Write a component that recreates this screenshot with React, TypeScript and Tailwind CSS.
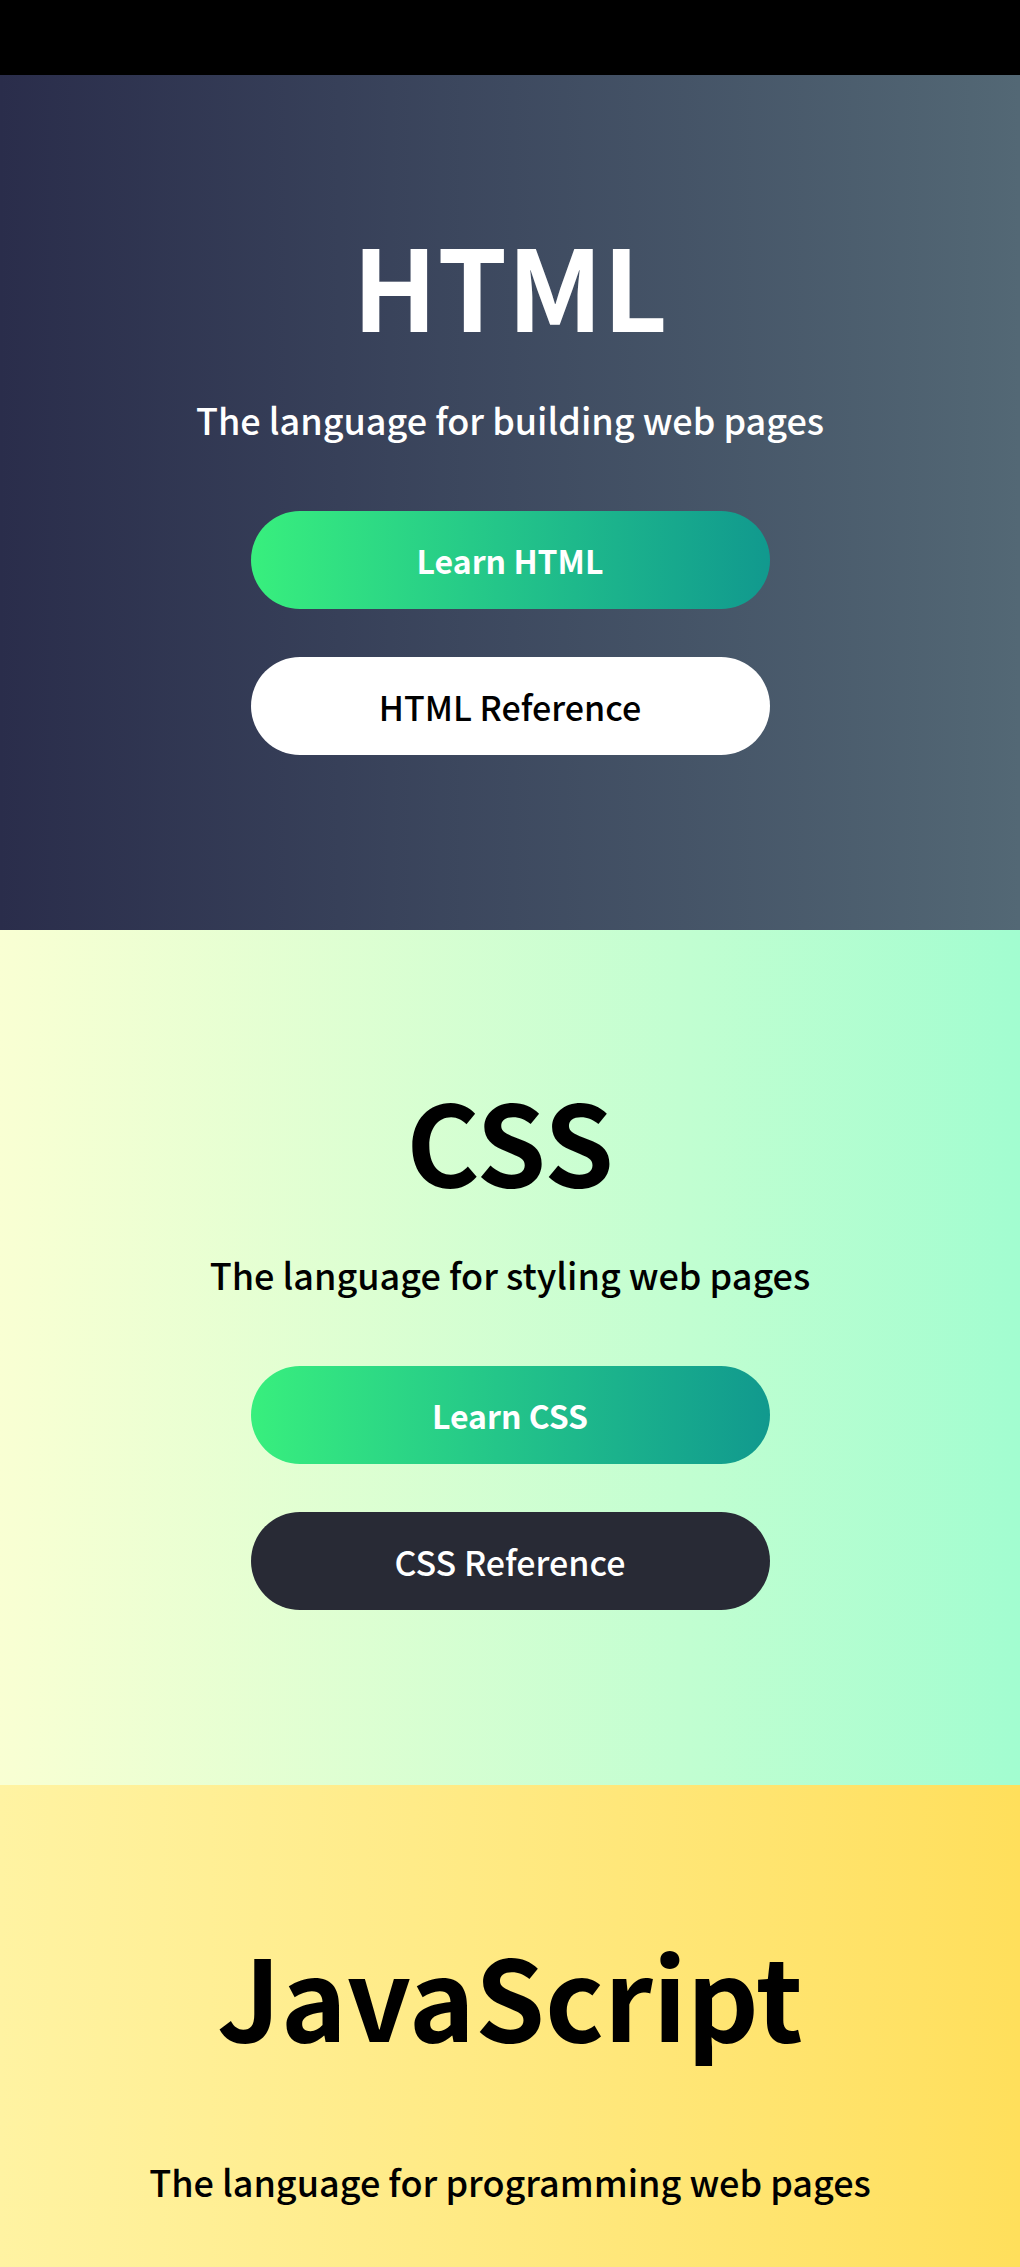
import React from 'react';

const font = { fontFamily: '"Noto Sans CJK SC", "Noto Sans", sans-serif' };

function Section({
  title,
  subtitle,
  bg,
  dark,
  learn,
  reference,
  subGap,
}: {
  title: string;
  subtitle: string;
  bg: string;
  dark?: boolean;
  learn?: string;
  reference?: string;
  subGap: string;
}) {
  return (
    <section className={`flex flex-col items-center pt-[152px] pb-[175px] ${bg}`}>
      <h1 className={`text-[112px] leading-none font-bold ${dark ? 'text-white' : 'text-black'}`}>{title}</h1>
      <p className={`${subGap} text-[36px] leading-none font-medium ${dark ? 'text-white' : 'text-black'}`}>
        {subtitle}
      </p>
      {learn && (
        <button className="mt-[74px] w-[519px] h-[98px] rounded-full bg-gradient-to-r from-[#38ef7d] to-[#11998e] text-white text-[32px] font-semibold">
          {learn}
        </button>
      )}
      {reference && (
        <button
          className={`mt-[48px] w-[519px] h-[98px] rounded-full text-[34px] font-medium ${
            dark ? 'bg-white text-black' : 'bg-[#282a35] text-white'
          }`}
        >
          {reference}
        </button>
      )}
    </section>
  );
}

export default function App() {
  return (
    <div style={font} className="w-full">
      <div className="h-[75px] bg-black" />
      <Section
        title="HTML"
        subtitle="The language for building web pages"
        bg="bg-gradient-to-r from-[#2a2d4b] to-[#536875]"
        dark
        learn="Learn HTML"
        reference="HTML Reference"
        subGap="mt-[62px]"
      />
      <Section
        title="CSS"
        subtitle="The language for styling web pages"
        bg="bg-gradient-to-r from-[#f9ffd3] to-[#a2fdd0]"
        learn="Learn CSS"
        reference="CSS Reference"
        subGap="mt-[62px]"
      />
      <Section
        title="JavaScript"
        subtitle="The language for programming web pages"
        bg="bg-gradient-to-r from-[#fff3a2] to-[#ffdf5b]"
        subGap="mt-[114px]"
      />
    </div>
  );
}
